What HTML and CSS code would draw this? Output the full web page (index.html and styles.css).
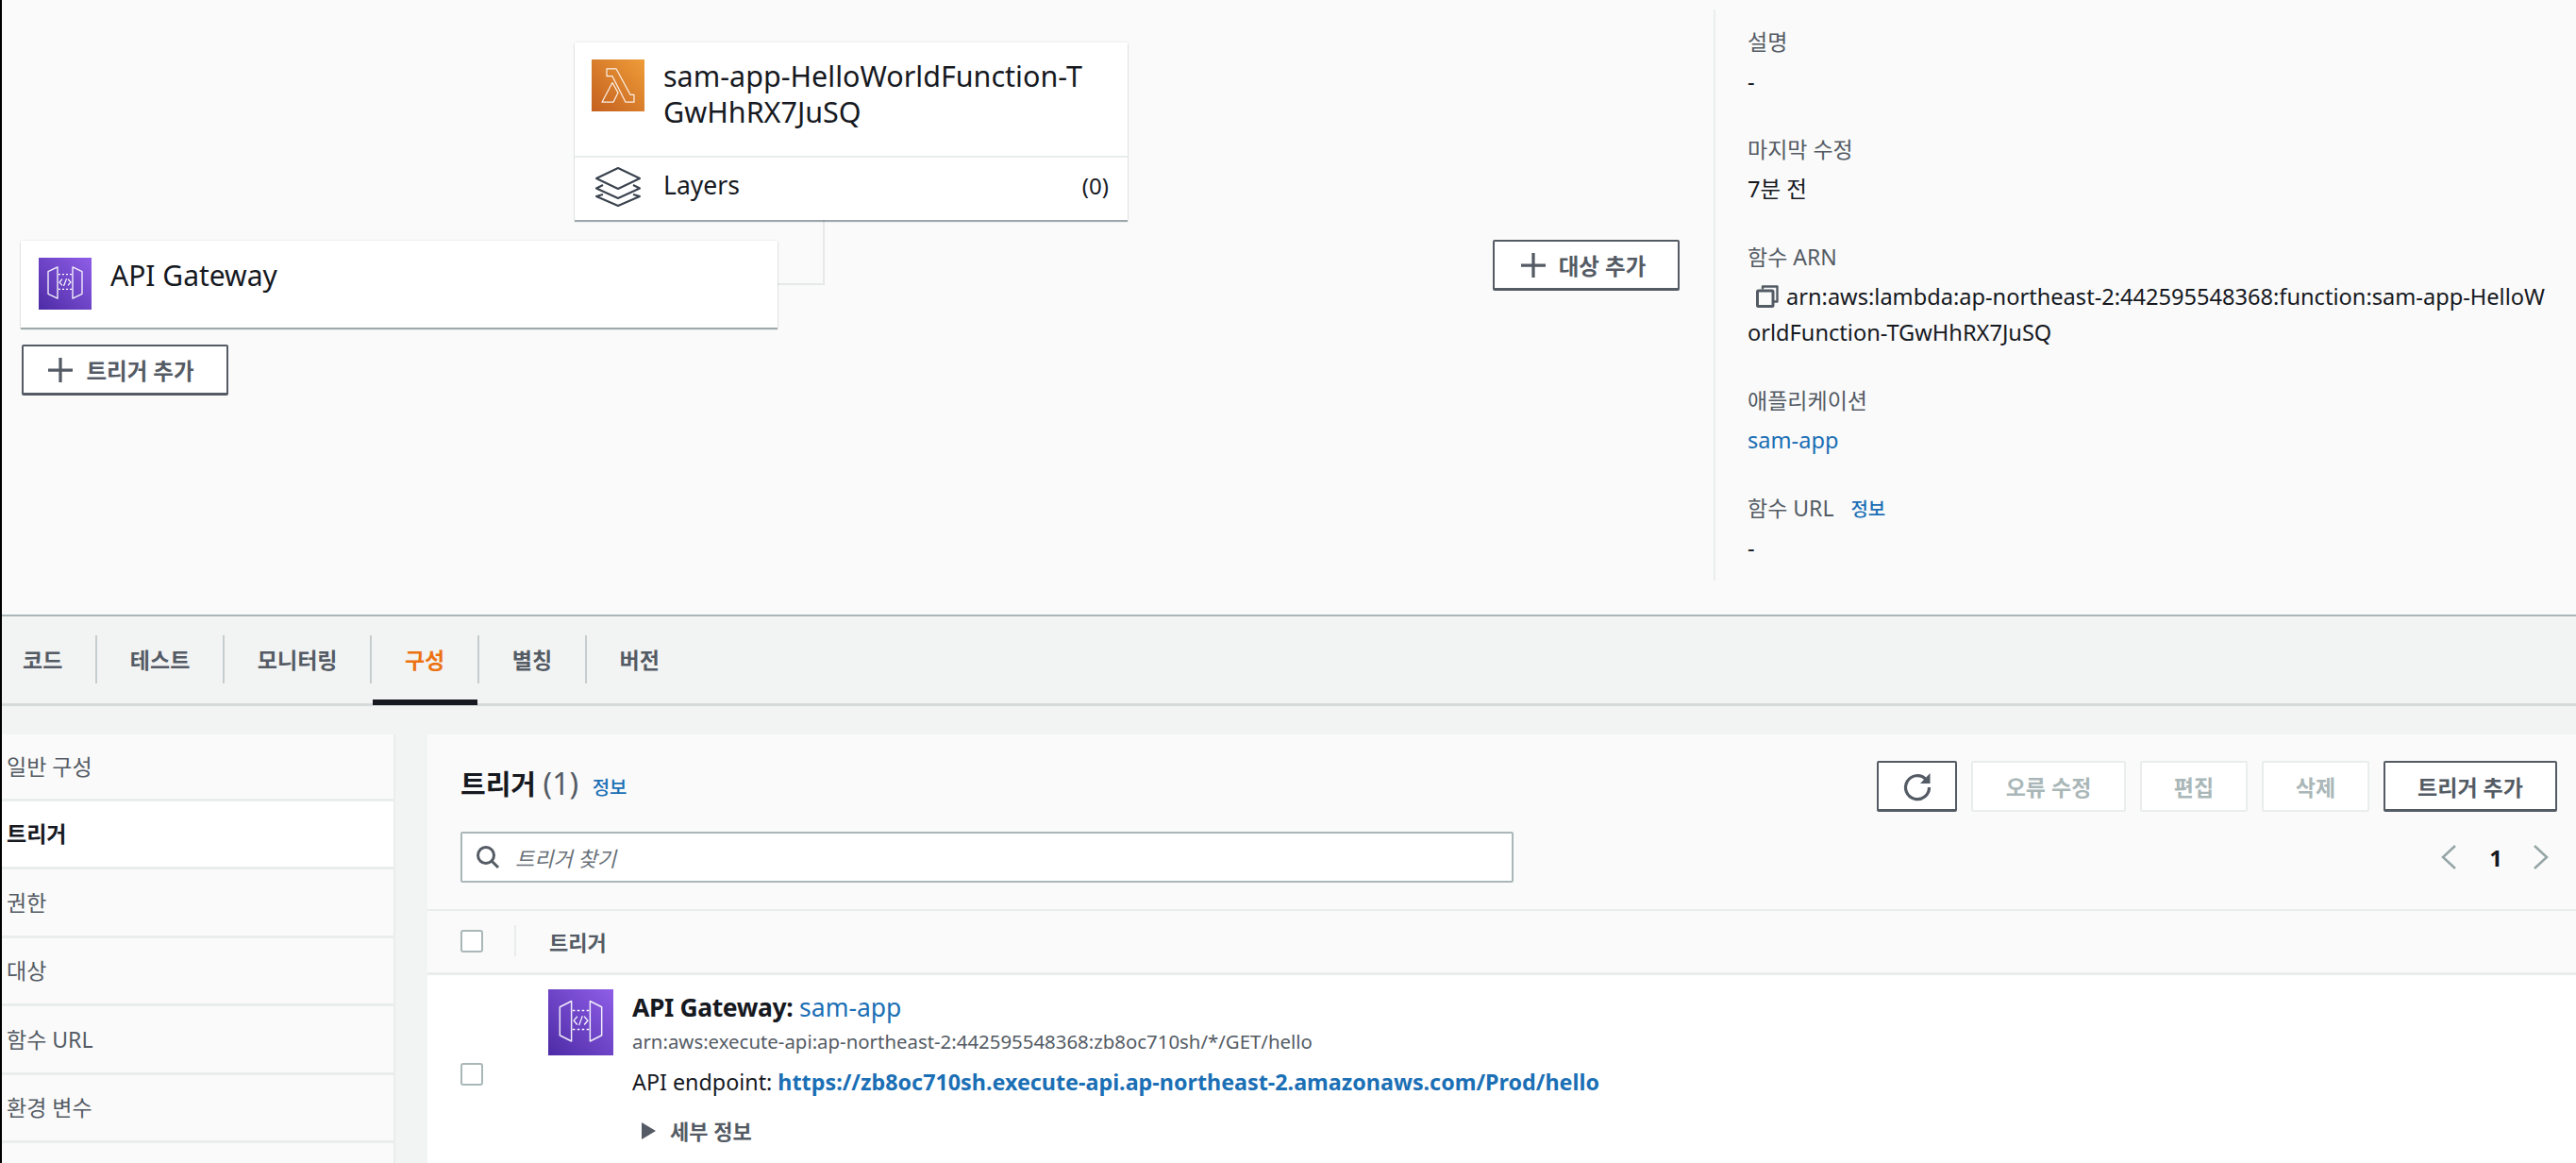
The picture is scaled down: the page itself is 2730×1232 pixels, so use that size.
FILE: index.html
```html
<!DOCTYPE html>
<html lang="ko">
<head>
<meta charset="utf-8">
<title>Lambda</title>
<link rel="stylesheet" href="styles.css">
</head>
<body>
<div class="app">
  <section class="overview">
    <div class="diagram">
      <svg class="connector" width="60" height="80" viewBox="0 0 60 80"><path d="M0 68H49V0" fill="none" stroke="#e6e9e9" stroke-width="2"/></svg>
      <div class="card card-fn">
        <div class="fn-head">
          <svg class="node-icon" viewBox="0 0 56 56" preserveAspectRatio="none"><defs><linearGradient id="lg1" x1="0" y1="1" x2="1" y2="0"><stop offset="0" stop-color="#c4601f"/><stop offset="1" stop-color="#ee9c38"/></linearGradient></defs><rect width="56" height="56" fill="url(#lg1)"/><path d="M16 10H26L41 38H45V46H36L22 18H16ZM11 46L22 25L28 36L23 46Z" fill="none" stroke="#fff" stroke-width="1.2" stroke-linejoin="round" opacity=".9"/></svg>
          <div class="fn-name">sam-app-HelloWorldFunction-T<br>GwHhRX7JuSQ</div>
        </div>
        <div class="fn-layers">
          <svg class="layers-icon" viewBox="0 0 48 42"><path d="M24 1L47 12L24 23L1 12ZM8 19L1 22.500L24 33L47 22.500L40 19M8 29L1 31L24 41L47 31L40 29" fill="none" stroke="#39424e" stroke-width="2" stroke-linejoin="round"/></svg>
          <span class="layers-label">Layers</span>
          <span class="layers-count">(0)</span>
        </div>
      </div>
      <div class="card card-trigger">
        <svg class="node-icon" viewBox="0 0 56 56" preserveAspectRatio="none"><defs><linearGradient id="pg1" x1="0" y1="1" x2="1" y2="0"><stop offset="0" stop-color="#4d2ba5"/><stop offset="1" stop-color="#8f5ee8"/></linearGradient></defs><rect width="56" height="56" fill="url(#pg1)"/><path d="M20 10L10 15V39L20 44ZM36 10L46 15V39L36 44Z" fill="none" stroke="#fff" stroke-width="1.400" stroke-linejoin="round" opacity=".9"/><path d="M21 18H35M21 34H35" stroke="#fff" stroke-width="1.400" stroke-dasharray="2 2"/><path d="M25 23L22 26.500L25 30M31 23L34 26.500L31 30M29.500 22.500L26.500 30.500" fill="none" stroke="#fff" stroke-width="1.200"/></svg>
        <span class="trigger-name">API Gateway</span>
      </div>
      <button class="btn btn-add btn-add-trigger"><svg class="plus" viewBox="0 0 24 24"><path d="M12 0V24M0 12H24" stroke="#545b64" stroke-width="3"/></svg>트리거 추가</button>
      <button class="btn btn-add btn-add-dest"><svg class="plus" viewBox="0 0 24 24"><path d="M12 0V24M0 12H24" stroke="#545b64" stroke-width="3"/></svg>대상 추가</button>
    </div>
    <aside class="details">
      <div class="field">
        <div class="label">설명</div>
        <div class="value">-</div>
      </div>
      <div class="field">
        <div class="label">마지막 수정</div>
        <div class="value">7분 전</div>
      </div>
      <div class="field">
        <div class="label">함수 ARN</div>
        <div class="value arn"><svg class="copy" viewBox="0 0 24 24"><path d="M7 4.500V1.500H22.500V17.500H19" fill="none" stroke="#545b64" stroke-width="2.400" stroke-linejoin="round"/><rect x="1.500" y="6" width="16.500" height="16.500" rx="1" fill="none" stroke="#545b64" stroke-width="3"/></svg>arn:aws:lambda:ap-northeast-2:442595548368:function:sam-app-HelloW<br>orldFunction-TGwHhRX7JuSQ</div>
      </div>
      <div class="field">
        <div class="label">애플리케이션</div>
        <div class="value"><a class="link" href="#">sam-app</a></div>
      </div>
      <div class="field">
        <div class="label">함수 URL <a class="info" href="#">정보</a></div>
        <div class="value">-</div>
      </div>
    </aside>
  </section>

  <nav class="tabs">
    <div class="tab tab-first">코드</div>
    <div class="tab">테스트</div>
    <div class="tab">모니터링</div>
    <div class="tab tab-active">구성</div>
    <div class="tab">별칭</div>
    <div class="tab tab-last">버전</div>
  </nav>

  <section class="config">
    <ul class="side">
      <li class="side-item">일반 구성</li>
      <li class="side-item side-active">트리거</li>
      <li class="side-item">권한</li>
      <li class="side-item">대상</li>
      <li class="side-item">함수 URL</li>
      <li class="side-item">환경 변수</li>
    </ul>
    <div class="panel">
      <div class="panel-head">
        <div class="panel-row">
          <h2 class="panel-title">트리거 <span class="count">(1)</span> <a class="info info-title" href="#">정보</a></h2>
          <div class="actions">
            <button class="btn btn-refresh"><svg class="refresh" viewBox="0 0 30 32"><path d="M24 8.500A12.500 12.500 0 1 0 27.500 17" fill="none" stroke="#545b64" stroke-width="3.200"/><path d="M28.500 2V13H18Z" fill="#545b64"/></svg></button>
            <button class="btn btn-off btn-fix">오류 수정</button>
            <button class="btn btn-off btn-small">편집</button>
            <button class="btn btn-off btn-small">삭제</button>
            <button class="btn btn-primary-add">트리거 추가</button>
          </div>
        </div>
        <div class="panel-row search-row">
          <div class="search">
            <svg class="search-icon" viewBox="0 0 26 26"><circle cx="11" cy="11" r="8.500" fill="none" stroke="#545b64" stroke-width="3"/><path d="M17 17L24 24" stroke="#545b64" stroke-width="3"/></svg>
            <span class="placeholder">트리거 찾기</span>
          </div>
          <div class="pager">
            <svg class="chev" viewBox="0 0 18 26"><path d="M16 1L3 13L16 25" fill="none" stroke="#95a5a6" stroke-width="2.500"/></svg>
            <span class="page-num">1</span>
            <svg class="chev" viewBox="0 0 18 26"><path d="M2 1L15 13L2 25" fill="none" stroke="#95a5a6" stroke-width="2.500"/></svg>
          </div>
        </div>
      </div>
      <div class="thead">
        <span class="check"></span>
        <span class="th-sep"></span>
        <span class="th">트리거</span>
      </div>
      <div class="trow">
        <span class="check check-row"></span>
        <svg class="row-icon" viewBox="0 0 56 56" preserveAspectRatio="none"><defs><linearGradient id="pg2" x1="0" y1="1" x2="1" y2="0"><stop offset="0" stop-color="#4d2ba5"/><stop offset="1" stop-color="#8f5ee8"/></linearGradient></defs><rect width="56" height="56" fill="url(#pg2)"/><path d="M20 10L10 15V39L20 44ZM36 10L46 15V39L36 44Z" fill="none" stroke="#fff" stroke-width="1.200" stroke-linejoin="round" opacity=".9"/><path d="M21 18H35M21 34H35" stroke="#fff" stroke-width="1.200" stroke-dasharray="2 2"/><path d="M25 23L22 26.500L25 30M31 23L34 26.500L31 30M29.500 22.500L26.500 30.500" fill="none" stroke="#fff" stroke-width="1"/></svg>
        <div class="row-body">
          <div class="row-title"><strong class="row-strong">API Gateway:</strong> <a class="link" href="#">sam-app</a></div>
          <div class="row-arn">arn:aws:execute-api:ap-northeast-2:442595548368:zb8oc710sh/*/GET/hello</div>
          <div class="row-endpoint">API endpoint: <a class="link link-bold" href="#">https://zb8oc710sh.execute-api.ap-northeast-2.amazonaws.com/Prod/hello</a></div>
          <div class="row-details"><span class="tri"></span>세부 정보</div>
        </div>
      </div>
    </div>
  </section>
</div>
</body>
</html>
```

FILE: styles.css
```css
* { box-sizing: border-box; }
html, body { margin: 0; padding: 0; }
body {
  width: 2730px;
  height: 1232px;
  overflow: hidden;
  font-family: "Noto Sans", "Noto Sans CJK KR", sans-serif;
  font-size: 24px;
  color: #16191f;
  background: #f2f3f3;
}
.app {
  height: 1232px;
  border-left: 2px solid #000;
  display: flex;
  flex-direction: column;
}
a { text-decoration: none; }
.link { color: #1b6fb5; }
.link-bold { font-weight: 700; }
.info { color: #1b6fb5; font-size: 20px; font-weight: 500; margin-left: 12px; }

/* overview */
.overview {
  height: 653px;
  flex: none;
  display: flex;
  background: #fafafa;
  border-bottom: 2px solid #aab7b8;
}
.diagram { position: relative; width: 1814px; flex: none; }
.card {
  position: absolute;
  background: #fff;
  box-shadow: 0 2px 1px rgba(0, 28, 36, .35), 0 0 2px rgba(0, 28, 36, .12);
}
.card-fn { left: 607px; top: 45px; width: 586px; height: 188px; }
.card-trigger {
  left: 20px; top: 255px; width: 802px; height: 92px;
  display: flex; align-items: flex-start; padding: 18px 19px;
}
.connector { position: absolute; left: 822px; top: 233px; }
.node-icon { width: 56px; height: 55px; flex: none; display: block; }
.fn-head { height: 122px; display: flex; padding: 18px 18px 0; border-bottom: 2px solid #eaeded; }
.fn-name { margin: -2px 0 0 20px; font-size: 30.500px; line-height: 38px; }
.fn-layers { display: flex; align-items: center; height: 64px; padding: 0 20px 0 22px; }
.layers-icon { width: 48px; height: 42px; flex: none; margin-top: -2px; }
.layers-label { margin-left: 24px; font-size: 26.500px; transform: translateY(-3px); }
.layers-count { margin-left: auto; font-size: 24px; transform: translateY(-3px); }
.trigger-name { margin-left: 20px; font-size: 30px; line-height: 38px; }

/* buttons */
.btn {
  font-family: inherit;
  font-size: 23px;
  font-weight: 700;
  height: 54px;
  padding: 0;
  background: #fff;
  color: #545b64;
  border: 2px solid #545b64;
  border-bottom-width: 3px;
  border-radius: 2px;
  display: inline-flex;
  align-items: center;
  justify-content: center;
}
.btn-add { position: absolute; gap: 14px; }
.btn-add-trigger { left: 21px; top: 365px; width: 219px; font-size: 23.500px; padding-right: 8px; }
.btn-add-dest { left: 1580px; top: 254px; width: 198px; font-size: 23.500px; padding-right: 6px; }
.plus { width: 26px; height: 26px; }

/* details */
.details {
  width: 900px;
  margin-top: 10px;
  height: 605px;
  border-left: 2px solid #eaeded;
  padding: 15px 0 0 34px;
  display: flex;
  flex-direction: column;
  gap: 33px;
}
.label { height: 38px; line-height: 38px; color: #545b64; font-size: 23px; margin-bottom: 4px; }
.value { line-height: 38px; font-size: 23.600px; margin-bottom: 1px; }
.copy { width: 24px; height: 24px; margin: 0 8px 0 9px; vertical-align: -3px; }

/* tabs */
.tabs {
  height: 95px;
  flex: none;
  display: flex;
  padding-top: 20px;
  border-bottom: 3px solid #d5dbdb;
  background: #f2f3f3;
}
.tab {
  position: relative;
  height: 51px;
  padding: 0 34.500px 2px 35px;
  border-right: 2px solid #c6cdce;
  display: flex;
  align-items: center;
  font-size: 23px;
  font-weight: 700;
  color: #545b64;
}
.tab-first { padding-left: 22px; }
.tab-last { border-right: 0; }
.tab-active { color: #ec7211; }
.tab-active::after {
  content: "";
  position: absolute;
  left: 1px;
  right: 0;
  bottom: -23px;
  height: 6px;
  background: #16191f;
}

/* config */
.config { flex: 1; display: flex; gap: 34px; padding-top: 30px; min-height: 0; }
.side {
  width: 417px;
  flex: none;
  list-style: none;
  margin: 0;
  padding: 0;
  background: #fafafa;
  border-right: 2px solid #eaeded;
}
.side-item {
  height: 72.500px;
  display: flex;
  align-items: center;
  padding: 0 0 2px 5px;
  border-bottom: 3px solid #eaeded;
  color: #545b64;
  font-size: 23px;
}
.side-item:first-child { height: 70.500px; }
.side-active { background: #fff; color: #16191f; font-weight: 700; }
.panel { flex: 1; background: #fafafa; display: flex; flex-direction: column; min-width: 0; }
.panel-head { padding: 28px 20px 28px 35px; }
.panel-row { display: flex; justify-content: space-between; align-items: flex-start; }
.panel-title { margin: 0; font-size: 29px; font-weight: 700; line-height: 48px; }
.count { font-weight: 400; color: #545b64; font-size: 32px; }
.info-title { margin-left: 7px; }
.actions { display: flex; gap: 15px; }
.btn-refresh { width: 85px; }
.refresh { width: 30px; height: 32px; }
.btn-off { color: #aab7b8; border: 2px solid #eaeded; }
.btn-fix { width: 164px; }
.btn-small { width: 114px; }
.btn-primary-add { width: 184px; }
.search-row { margin-top: 21px; align-items: center; }
.search {
  width: 1116px;
  height: 54px;
  background: #fff;
  border: 2px solid #aab7b8;
  border-radius: 2px;
  display: flex;
  align-items: center;
  padding-left: 14px;
}
.search-icon { width: 26px; height: 26px; flex: none; }
.placeholder { margin-left: 16px; font-style: italic; color: #687078; font-size: 22px; }
.pager { display: flex; align-items: center; gap: 33px; padding-right: 8px; }
.chev { width: 18px; height: 26px; }
.page-num { font-size: 24px; font-weight: 700; transform: translateX(1px); }

.thead {
  height: 70px;
  flex: none;
  display: flex;
  align-items: center;
  padding: 0 0 2px 35px;
  border-top: 2px solid #eaeded;
  border-bottom: 3px solid #eaeded;
}
.check {
  width: 24px;
  height: 24px;
  flex: none;
  background: #fff;
  border: 2px solid #aab7b8;
  border-radius: 3px;
}
.th-sep { width: 2px; height: 33px; background: #eaeded; margin-left: 33px; }
.th { margin-left: 35px; font-size: 22px; font-weight: 700; color: #545b64; }
.trow { flex: 1; background: #fff; display: flex; align-items: flex-start; padding: 15px 0 0 35px; }
.check-row { margin-top: 78px; }
.row-icon { width: 69px; height: 70px; flex: none; margin-left: 69px; display: block; }
.row-body { margin-left: 20px; }
.row-title { font-size: 26.500px; line-height: 38px; }
.row-strong { letter-spacing: -.4px; }
.row-arn { font-size: 20.400px; line-height: 34px; color: #545b64; }
.row-endpoint { margin-top: 7px; font-size: 23.300px; line-height: 38px; }
.row-details { margin-top: 14px; font-size: 22px; font-weight: 700; line-height: 38px; color: #545b64; display: flex; align-items: center; padding-left: 10px; }
.tri {
  width: 0; height: 0;
  border-left: 15px solid #545b64;
  border-top: 9px solid transparent;
  border-bottom: 9px solid transparent;
  margin-right: 15px;
}
```
